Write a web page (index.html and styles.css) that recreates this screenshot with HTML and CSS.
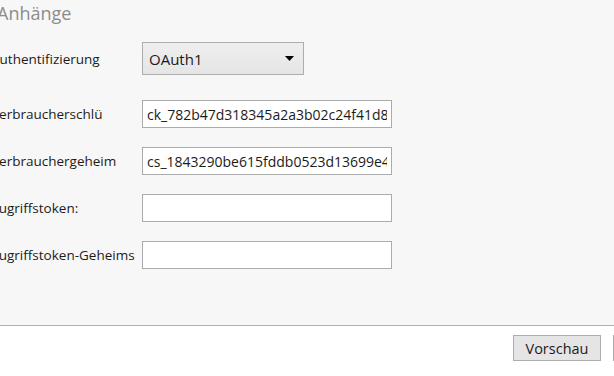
FILE: index.html
```html
<!DOCTYPE html>
<html lang="de">

<head>
    <meta charset="UTF-8">
    <meta name="viewport" content="width=device-width, initial-scale=1.0">
    <title>Anhänge</title>
    <link rel="stylesheet" href="styles.css">
</head>

<body>
    <div class="panel">
        <h2 class="title">Anhänge</h2>
        <form class="auth-form">
            <label class="field-label" for="auth">Authentifizierung</label>
            <div class="select-box" id="auth">
                <span>OAuth1</span>
                <svg class="arrow" width="9" height="5" viewBox="0 0 9 5"><path d="M0 0h9L4.5 5z" fill="#000"/></svg>
            </div>

            <label class="field-label spaced" for="key">Verbraucherschlü</label>
            <input class="text-field spaced" id="key" type="text" value="ck_782b47d318345a2a3b02c24f41d8b6c1">

            <label class="field-label" for="secret">Verbrauchergeheim</label>
            <input class="text-field" id="secret" type="text" value="cs_1843290be615fddb0523d13699e4a2">

            <label class="field-label" for="token">Zugriffstoken:</label>
            <input class="text-field" id="token" type="text">

            <label class="field-label" for="token-secret">Zugriffstoken-Geheims</label>
            <input class="text-field" id="token-secret" type="text">
        </form>
    </div>
    <div class="footer">
        <button type="button" class="btn">Vorschau</button>
        <button type="button" class="btn">OK</button>
    </div>
</body>
</html>
```

FILE: styles.css
```css
* {
    box-sizing: border-box;
}

body {
    margin: 0;
    width: 614px;
    height: 376px;
    overflow: hidden;
    background-color: #ffffff;
    font-family: "Open Sans", "Noto Sans", sans-serif;
    font-size: 13.5px;
    color: #1b1b1b;
}

.panel {
    height: 326px;
    background-color: #f7f7f7;
    border-bottom: 1px solid #b2b2b2;
    padding-top: 1px;
}

.title {
    margin: 0 0 0 -3px;
    font-size: 18px;
    font-weight: normal;
    color: #8c8c8c;
    line-height: 24px;
}

.auth-form {
    display: grid;
    grid-template-columns: 151px 250px;
    row-gap: 19px;
    margin: 17px 0 0 -9px;
    align-items: center;
}

.field-label {
    white-space: nowrap;
    overflow: hidden;
    line-height: 20px;
}

/* first text row sits a bit lower under the dropdown */
.spaced {
    margin-top: 6px;
}

.select-box {
    display: flex;
    justify-content: space-between;
    align-items: center;
    width: 162px;
    height: 33px;
    padding: 0 9px 0 6px;
    background: linear-gradient(#efefef, #e5e5e5);
    border: 1px solid #adadad;
    font-size: 15px;
}

.text-field {
    width: 250px;
    height: 28px;
    margin: 0;
    padding: 0 4px;
    border: 1px solid #ababab;
    background-color: #ffffff;
    font-family: "Open Sans", "Noto Sans", sans-serif;
    font-size: 14px;
    color: #1b1b1b;
    outline: none;
}

.text-field.spaced {
    margin-top: 6px;
}

.footer {
    display: flex;
    gap: 12px;
    padding: 9px 0 0 513px;
}

.btn {
    flex: none;
    width: 88px;
    height: 26px;
    margin: 0;
    padding: 0;
    background-color: #e5e5e5;
    border: 1px solid #adadad;
    font-family: "Open Sans", "Noto Sans", sans-serif;
    font-size: 14.5px;
    color: #1b1b1b;
}
```
